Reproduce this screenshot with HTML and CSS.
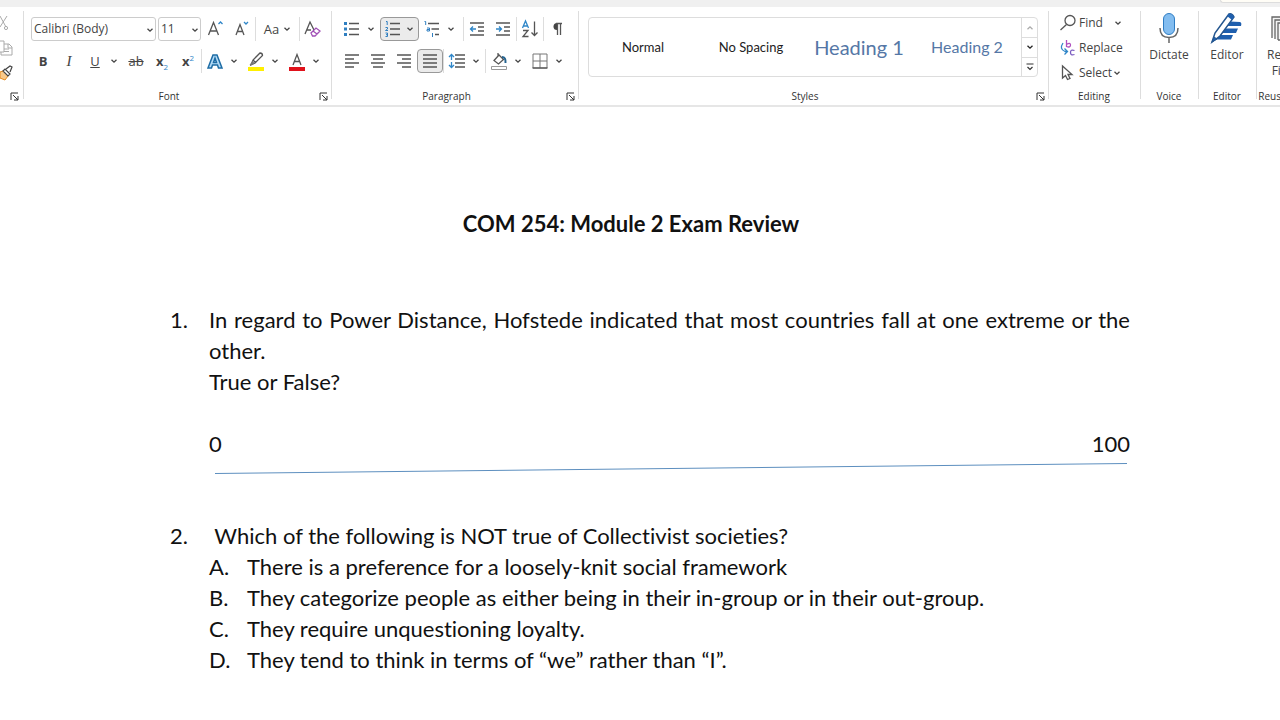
FILE: index.html
```html
<!DOCTYPE html>
<html lang="en">
<head>
<meta charset="utf-8">
<title>COM 254: Module 2 Exam Review</title>
<link rel="stylesheet" href="styles.css">
</head>
<body>
<svg class="defs" aria-hidden="true">
  <symbol id="chev" viewBox="0 0 8 8"><path d="M1.5 2.8 4 5.2 6.5 2.8" fill="none" stroke="currentColor" stroke-width="1.3"/></symbol>
  <symbol id="launch" viewBox="0 0 9 9"><path d="M1 8V1h7M3 3l5 5M8 4v4H4" fill="none" stroke="currentColor"/></symbol>
</svg>
<div class="titlebar"><span class="share"></span></div>
<header class="ribbon">
  <section class="group clipboard">
    <div class="tools stack">
      <button aria-label="Cut"><svg width="9" height="16" viewBox="0 0 9 16"><path d="M0 1 6 12M7 1 0 12" fill="none" stroke="#aaa"/><circle cx="6" cy="13" r="1.6" fill="none" stroke="#aaa"/></svg></button>
      <button aria-label="Copy"><svg width="13" height="17" viewBox="0 0 13 17"><path d="M0 2h4v11H0M4 5h5l3 3v8H1V13M8 5v4h4M4 10h5M4 12.500h5" fill="none" stroke="#aaa"/></svg></button>
      <button aria-label="Format painter"><svg width="13" height="16" viewBox="0 0 13 16"><path d="M0 7 3 6l5 5-3 4-5-2z" fill="#f9c98a" stroke="#e58a1f"/><path d="m3 6 2-2 5 5-2 2zM6 4l4-3 2 1-2 5" fill="#fff" stroke="#444" stroke-width="1.200"/></svg></button>
    </div>
    <footer><span class="label"></span><button class="launch" aria-label="Clipboard options"><svg><use href="#launch"/></svg></button></footer>
  </section>

  <section class="group font">
    <div class="tools">
      <div class="row">
        <span class="combo name"><select aria-label="Font"><option>Calibri (Body)</option></select><svg class="chev"><use href="#chev"/></svg></span>
        <span class="combo size"><select aria-label="Font size"><option>11</option></select><svg class="chev"><use href="#chev"/></svg></span>
        <button class="ic" aria-label="Grow font"><svg width="20" height="20" viewBox="0 0 20 20"><path d="M2.500 16 7.500 3.500 12.500 16M4.200 12h6.600" class="k"/><path d="m12.500 5 2-2 2 2" class="b"/></svg></button>
        <button class="ic" aria-label="Shrink font"><svg width="20" height="20" viewBox="0 0 20 20"><path d="M4 16 8 5.500 12 16M5.500 12.500h5" class="k"/><path d="m12 3 2 2 2-2" class="b"/></svg></button>
        <i class="sep"></i>
        <button class="case" aria-label="Change case">Aa<svg class="chev"><use href="#chev"/></svg></button>
        <i class="sep"></i>
        <button class="ic" aria-label="Clear formatting"><svg width="20" height="20" viewBox="0 0 20 20"><path d="M2 15 7 3l4 8M4 11h4" class="k"/><path d="m8 14 5-5 4 3-5 5H9.500zM10 12l4 3" fill="#fff" stroke="#a04fb5" stroke-width="1.300"/></svg></button>
      </div>
      <div class="row">
        <button class="ic"><b>B</b></button>
        <button class="ic"><i class="ital">I</i></button>
        <button class="ic"><u>U</u></button><button class="dd" aria-label="Underline style"><svg class="chev"><use href="#chev"/></svg></button>
        <button class="ic"><s>ab</s></button>
        <button class="ic" aria-label="Subscript"><span><b>x</b><sub>2</sub></span></button>
        <button class="ic" aria-label="Superscript"><span><b>x</b><sup>2</sup></span></button>
        <i class="sep"></i>
        <button class="ic" aria-label="Text effects"><svg width="20" height="20" viewBox="0 0 20 20"><path d="M3 17 8 4h4l5 13h-3.500l-1-3h-5l-1 3zM8.500 11.500h3L10 7z" fill="#b5dcf7" stroke="#1d6ca5" stroke-width="1.500"/></svg></button><button class="dd" aria-label="Text effects menu"><svg class="chev"><use href="#chev"/></svg></button>
        <button class="ic" aria-label="Highlight"><svg width="20" height="20" viewBox="0 0 20 20"><path d="M2 16h16v4H2z" fill="#ffef00"/><path d="M5 14 7 9l7-7q2.500 0 2.500 2.500L9 12zM7 9l3 3" fill="none" stroke="#555" stroke-width="1.300"/><path d="m3.500 14 3-4 2 2-2 2z" fill="#777"/></svg></button><button class="dd" aria-label="Highlight colour"><svg class="chev"><use href="#chev"/></svg></button>
        <button class="ic" aria-label="Font color"><svg width="20" height="20" viewBox="0 0 20 20"><path d="M2 16h16v4H2z" fill="#e0121b"/><path d="M6 14 10 3.500 14 14M7.500 10.500h5" class="k"/></svg></button><button class="dd" aria-label="Font color menu"><svg class="chev"><use href="#chev"/></svg></button>
      </div>
    </div>
    <footer><span class="label">Font</span><button class="launch" aria-label="Font options"><svg><use href="#launch"/></svg></button></footer>
  </section>

  <section class="group para">
    <div class="tools">
      <div class="row">
        <button class="ic" aria-label="Bullets"><svg width="18" height="18" viewBox="0 0 18 18"><path d="M1 2h3v3H1zM1 7.500h3v3H1zM1 13h3v3H1z" fill="#2f7fc1"/><path d="M6 3.500h10M6 9h10M6 14.500h10" class="k"/></svg></button><button class="dd" aria-label="Bullet library"><svg class="chev"><use href="#chev"/></svg></button>
        <span class="split on"><button class="ic" aria-label="Numbering" aria-pressed="true"><svg width="18" height="18" viewBox="0 0 18 18"><path d="M2 1.500h1.200V5M1.500 7.500h2v1.500l-2 1.500h2.500M1.500 13h2v3.500h-2M2 14.700h1.500" fill="none" stroke="#2f7fc1"/><path d="M6 3.500h10M6 9h10M6 14.500h10" class="k"/></svg></button><button class="dd" aria-label="Numbering library"><svg class="chev"><use href="#chev"/></svg></button></span>
        <button class="ic" aria-label="Multilevel list"><svg width="18" height="18" viewBox="0 0 18 18"><path d="M1.500 1.500h1.200V5M4 8h2.500v3H4V9.500h2.500M9.500 13v4" fill="none" stroke="#2f7fc1"/><path d="M5 3.500h11M8.500 9H16M12 14.500h4" class="k"/></svg></button><button class="dd" aria-label="List library"><svg class="chev"><use href="#chev"/></svg></button>
        <i class="sep gap"></i>
        <button class="ic" aria-label="Decrease indent"><svg width="18" height="18" viewBox="0 0 18 18"><path d="M2 3h14M10 7h6M10 11h6M2 15h14" class="k"/><path d="M8 9H2.500M5 6.500 2.500 9 5 11.500" class="b"/></svg></button>
        <button class="ic" aria-label="Increase indent"><svg width="18" height="18" viewBox="0 0 18 18"><path d="M2 3h14M10 7h6M10 11h6M2 15h14" class="k"/><path d="M2 9h5.500M5 6.500 7.500 9 5 11.500" class="b"/></svg></button>
        <i class="sep"></i>
        <button class="ic" aria-label="Sort"><svg width="18" height="20" viewBox="0 0 18 20"><path d="M1.500 9 4.500 2l3 7M2.500 7h4" class="b"/><path d="M2 11.500h5L2 17.500h5.500M13.500 2.500v14M10.500 13.500l3 3 3-3" class="k"/></svg></button>
        <i class="sep"></i>
        <button class="ic" aria-label="Show marks"><svg width="18" height="18" viewBox="0 0 18 18"><path d="M9 3a3.500 3.500 0 0 0 0 7z" fill="#444"/><path d="M8 3.500h6M9.500 3v12M12.500 3v12" class="k"/></svg></button>
      </div>
      <div class="row">
        <button class="ic" aria-label="Align left"><svg width="18" height="18" viewBox="0 0 18 18"><path d="M2 3h14M2 7h9M2 11h14M2 15h9" class="k"/></svg></button>
        <button class="ic" aria-label="Center"><svg width="18" height="18" viewBox="0 0 18 18"><path d="M2 3h14M4 7h10M2 11h14M4 15h10" class="k"/></svg></button>
        <button class="ic" aria-label="Align right"><svg width="18" height="18" viewBox="0 0 18 18"><path d="M2 3h14M7 7h9M2 11h14M7 15h9" class="k"/></svg></button>
        <button class="ic on" aria-label="Justify" aria-pressed="true"><svg width="18" height="18" viewBox="0 0 18 18"><path d="M2 3h14M2 7h14M2 11h14M2 15h14" class="k"/></svg></button>
        <i class="sep"></i>
        <button class="ic" aria-label="Line spacing"><svg width="18" height="18" viewBox="0 0 18 18"><path d="M7 3h10M7 7h10M7 11h10M7 15h10" class="k"/><path d="M3.500 2.500V8M1 5l2.500-2.500L6 5M3.500 10v5.500M1 13l2.500 2.500L6 13" class="b"/></svg></button><button class="dd" aria-label="Spacing options"><svg class="chev"><use href="#chev"/></svg></button>
        <i class="sep"></i>
        <button class="ic" aria-label="Shading"><svg width="18" height="20" viewBox="0 0 18 20"><path d="M1.500 15.500h15v3h-15z" fill="#fff" stroke="#999"/><path d="M4 9.500 9 4l4.500 4.500L8.500 13zM8 5V2" class="k"/><path d="M12 6q4 0 3.500 6" fill="none" stroke="#24638f" stroke-width="2"/></svg></button><button class="dd" aria-label="Shading colours"><svg class="chev"><use href="#chev"/></svg></button>
        <button class="ic" aria-label="Borders"><svg width="18" height="18" viewBox="0 0 18 18"><path d="M2 2h14v14H2zM9 2v14M2 9h14" fill="none" stroke="#777"/><path d="M1.500 16h15" class="k"/></svg></button><button class="dd" aria-label="Border options"><svg class="chev"><use href="#chev"/></svg></button>
      </div>
    </div>
    <footer><span class="label">Paragraph</span><button class="launch" aria-label="Paragraph options"><svg><use href="#launch"/></svg></button></footer>
  </section>

  <section class="group styles">
    <div class="tools">
      <div class="gallery">
        <button>Normal</button><button>No Spacing</button><button class="h1">Heading 1</button><button class="h2">Heading 2</button>
        <div class="scroll">
          <button aria-label="Previous styles" disabled><svg class="chev up"><use href="#chev"/></svg></button>
          <button aria-label="Next styles"><svg class="chev"><use href="#chev"/></svg></button>
          <button aria-label="All styles"><svg width="8" height="8" viewBox="0 0 8 8"><path d="M0.500 1h7M1.500 4 4 6.500 6.500 4" fill="none" stroke="#333" stroke-width="1.200"/></svg></button>
        </div>
      </div>
    </div>
    <footer><span class="label">Styles</span><button class="launch" aria-label="Styles options"><svg><use href="#launch"/></svg></button></footer>
  </section>

  <section class="group editing">
    <div class="tools stack">
      <button><svg width="16" height="18" viewBox="0 0 16 18"><circle cx="10" cy="6.500" r="5" class="k"/><path d="M6.500 10.500 0.500 16" class="k"/></svg>Find<svg class="chev far"><use href="#chev"/></svg></button>
      <button><svg width="16" height="18" viewBox="0 0 16 18"><path d="M6.500 1v7M6.500 5.500q4-2.500 4 .5t-4 1.500" fill="none" stroke="#b04fc0" stroke-width="1.300"/><path d="M14.500 11.500q-4-1.500-4 2t4 2" fill="none" stroke="#7a5bc0" stroke-width="1.300"/><path d="M3 4q-4 6 2 8.500h2M4.500 9.500l3 3-3 3" class="b"/></svg>Replace</button>
      <button><svg width="16" height="18" viewBox="0 0 16 18"><path d="M2.500 2v12l3-2.500 2 4 2.500-1-2-4h4z" class="k"/></svg>Select<svg class="chev near"><use href="#chev"/></svg></button>
    </div>
    <footer><span class="label">Editing</span></footer>
  </section>

  <section class="group single voice">
    <div class="tools">
      <button class="big"><svg width="22" height="32" viewBox="0 0 22 32"><rect x="5.500" y="1.500" width="11" height="21" rx="5.500" fill="#83bdf0" stroke="#2f7dc4"/><path d="M2 16q0 9.500 9 9.500t9-9.500M11 26v5" fill="none" stroke="#666" stroke-width="1.500"/></svg>Dictate</button>
    </div>
    <footer><span class="label">Voice</span></footer>
  </section>

  <section class="group single">
    <div class="tools">
      <button class="big"><svg width="34" height="32" viewBox="0 0 34 32"><path d="m20 9.500 10 .5q2 .5 1 4H16l4-4.500zM14 16.500h14l-2 4.500H10zM9 23h14l-2 4.500H6z" fill="#1f5fae"/><path d="m2 30 3-9L19 2q3-1 5 3L10 24z" fill="#fff" stroke="#24568f" stroke-width="1.500"/><path d="m17 4 5 4 2-3q-2-4-5-3z" fill="#1f5fae"/><path d="m2 30 2-5 3 2z" fill="#1f5fae" stroke="#24568f"/></svg>Editor</button>
    </div>
    <footer><span class="label">Editor</span></footer>
  </section>

  <section class="group reuse">
    <div class="tools">
      <button class="big"><svg width="28" height="32" viewBox="0 0 28 32"><path d="M2 26V5h18v3M5 27V8h18v20H8M8 28V11h15" fill="#f4f4f4" stroke="#666" stroke-width="1.300"/></svg>Reuse<br>Files</button>
    </div>
    <footer><span class="label">Reuse Files</span></footer>
  </section>
</header>

<main class="page">
  <h1>COM 254: Module 2 Exam Review</h1>
  <ol class="questions">
    <li>
      <span>1.</span>
      <div>
        <p>In regard to Power Distance, Hofstede indicated that most countries fall at one extreme or the other.<br>True or False?</p>
        <div class="scale"><span>0</span><span>100</span></div>
        <svg class="rule" viewBox="0 0 912 11" preserveAspectRatio="none"><path d="M0 10.500 912 .5" fill="none" stroke="#5d8fbf" vector-effect="non-scaling-stroke"/></svg>
      </div>
    </li>
    <li>
      <span>2.</span>
      <div>
        <p>&nbsp;Which of the following is NOT true of Collectivist societies?</p>
        <ol class="answers">
          <li><span>A.</span><span>There is a preference for a loosely-knit social framework</span></li>
          <li><span>B.</span><span>They categorize people as either being in their in-group or in their out-group.</span></li>
          <li><span>C.</span><span>They require unquestioning loyalty.</span></li>
          <li><span>D.</span><span>They tend to think in terms of “we” rather than “I”.</span></li>
        </ol>
      </div>
    </li>
  </ol>
</main>
</body>
</html>
```
FILE: styles.css
```css
* { box-sizing: border-box; }
body { margin: 0; background: #fff; color: #111; font-family: "Open Sans", "Noto Sans", sans-serif; }
button, select { margin: 0; padding: 0; border: 0; background: none; font: inherit; color: inherit; }
.defs { position: absolute; width: 0; height: 0; }

.titlebar { display: flex; justify-content: flex-end; height: 7px; background: #f0f0f0; }
.share { width: 60px; height: 3px; background: #fffdf6; border: solid #ddd; border-width: 0 0 1px 1px; border-radius: 0 0 0 4px; }

.ribbon { display: flex; height: 100px; overflow: hidden; border-bottom: 2px solid #e6e6e6; font-size: 12px; line-height: 14px; color: #444; }
.group { display: flex; flex-direction: column; flex: none; padding: 10px 0 2px; position: relative; }
.group + .group::before { content: ""; position: absolute; left: 0; top: 4px; bottom: 6px; width: 1px; background: #ddd; }
.group footer { display: flex; align-items: center; height: 14px; margin-top: auto; font-size: 10px; color: #333; }
.label { flex: 1; text-align: center; white-space: nowrap; }
.launch { display: flex; width: 16px; padding-left: 4px; }
.launch svg { width: 9px; height: 9px; }
.clipboard { width: 23px; padding-top: 3px; }
.clipboard .launch { padding-left: 3px; }
.font { width: 308px; }
.para { width: 247px; }
.styles { flex: 1; min-width: 0; }
.editing { width: 92px; padding-top: 3px; }
.single { width: 58px; padding-top: 5px; }
.reuse { flex: 0 1 24px; padding-top: 5px; overflow: hidden; }
.reuse .tools, .reuse footer { width: 56px; }

.tools { display: flex; flex-direction: column; gap: 8px; }
.row { display: flex; height: 24px; padding-left: 8px; }
.row > * { flex: none; }
.font .row { padding-left: 7px; }
.ic { display: grid; place-items: center; width: 26px; height: 24px; font-size: 13px; line-height: 20px; }
.dd { display: flex; align-items: center; justify-content: center; width: 12px; margin-right: 3px; }
.chev { width: 8px; height: 8px; flex: none; }
.up { transform: rotate(180deg); }
.k { fill: none; stroke: #555; stroke-width: 1.3; }
.b { fill: none; stroke: #2f86c8; stroke-width: 1.3; }
.sep { width: 1px; background: #ddd; }
.gap { margin-left: 3px; }
.on { background: #ebebeb; border: 1px solid #999; border-radius: 4px; }
.split { display: flex; width: 39px; }
.split .ic { width: 23px; height: 22px; }
.split .dd { margin: 0; }
.combo { position: relative; height: 24px; border: 1px solid #ccc; border-radius: 3px; }
.combo select { appearance: none; width: 100%; height: 100%; padding-left: 2px; }
.combo .chev { position: absolute; right: 1px; top: 8px; pointer-events: none; }
.name { width: 125px; margin: 0 2px 0 1px; }
.size { width: 43px; margin-right: 2px; }
.case { display: flex; align-items: center; justify-content: center; gap: 4px; width: 43px; font-size: 13px; }
.ital { font-family: "Liberation Serif", serif; font-size: 15px; }
sub, sup { font-size: 8px; line-height: 0; color: #2f86c8; }

.gallery { display: flex; height: 60px; margin: 0 10px 0 10px; border: 1px solid #ddd; border-radius: 4px; font-family: Lato, sans-serif; font-size: 13px; color: #222; }
.gallery > button { flex: 1; white-space: nowrap; }
.gallery .h1, .gallery .h2 { color: #5577a6; font-size: 20px; }
.gallery .h2 { font-size: 16px; }
.scroll { display: grid; grid-template-rows: repeat(3, 1fr); width: 16px; border-left: 1px solid #ddd; }
.scroll button { display: grid; place-items: center; }
.scroll button + button { border-top: 1px solid #ddd; }
.scroll button:disabled { color: #aaa; }

.stack { gap: 0; }
.stack button { display: flex; align-items: center; height: 25px; }
.editing .stack button { padding-left: 12px; gap: 3px; }
.editing .far { margin-left: 8px; }
.editing .near { margin-left: -2px; }
.big { display: flex; flex-direction: column; align-items: center; width: 100%; line-height: 16px; }
.big svg { margin-bottom: 3px; }

.page { padding: 101px 150px 40px 170px; font-family: Lato, "Open Sans", sans-serif; font-size: 22px; font-variant-ligatures: none; line-height: 31px; }
.page h1 { margin: 0 38px 65px 0; text-align: center; font-size: 22px; font-weight: 700; line-height: 31px; }
.page ol { list-style: none; margin: 0; padding: 0; }
.page p { margin: 0; text-align: justify; }
.questions li { display: grid; grid-template-columns: 39px 1fr; }
.answers li { grid-template-columns: 38px 1fr; }
.scale { display: flex; justify-content: space-between; margin-top: 31px; }
.rule { display: block; width: calc(100% - 9px); height: 11px; margin: 4px 0 46px 6px; }
```
